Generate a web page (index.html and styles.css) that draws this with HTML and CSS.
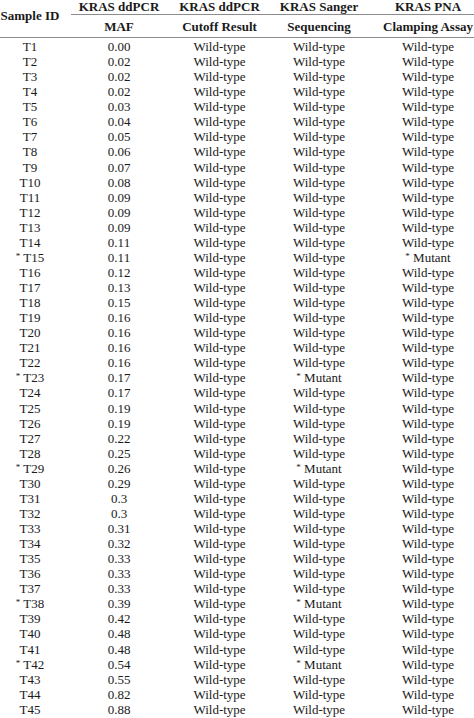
FILE: index.html
```html
<!DOCTYPE html>
<html>
<head>
<meta charset="utf-8">
<link rel="stylesheet" href="styles.css">
</head>
<body>
<table class="tbl">
<colgroup><col class="c1"><col class="c2"><col class="c3"><col class="c4"><col class="c5"></colgroup>
<thead>
<tr class="h1">
<th rowspan="2" class="sid">Sample ID</th>
<th class="grp first">KRAS ddPCR</th>
<th class="grp">KRAS ddPCR</th>
<th class="grp">KRAS Sanger</th>
<th class="grp">KRAS PNA</th>
</tr>
<tr class="h2">
<th>MAF</th>
<th>Cutoff Result</th>
<th>Sequencing</th>
<th>Clamping Assay</th>
</tr>
</thead>
<tbody>
<tr class="r0"><td>T1</td><td>0.00</td><td>Wild-type</td><td>Wild-type</td><td>Wild-type</td></tr>
<tr><td>T2</td><td>0.02</td><td>Wild-type</td><td>Wild-type</td><td>Wild-type</td></tr>
<tr><td>T3</td><td>0.02</td><td>Wild-type</td><td>Wild-type</td><td>Wild-type</td></tr>
<tr><td>T4</td><td>0.02</td><td>Wild-type</td><td>Wild-type</td><td>Wild-type</td></tr>
<tr><td>T5</td><td>0.03</td><td>Wild-type</td><td>Wild-type</td><td>Wild-type</td></tr>
<tr><td>T6</td><td>0.04</td><td>Wild-type</td><td>Wild-type</td><td>Wild-type</td></tr>
<tr><td>T7</td><td>0.05</td><td>Wild-type</td><td>Wild-type</td><td>Wild-type</td></tr>
<tr><td>T8</td><td>0.06</td><td>Wild-type</td><td>Wild-type</td><td>Wild-type</td></tr>
<tr><td>T9</td><td>0.07</td><td>Wild-type</td><td>Wild-type</td><td>Wild-type</td></tr>
<tr><td>T10</td><td>0.08</td><td>Wild-type</td><td>Wild-type</td><td>Wild-type</td></tr>
<tr><td>T11</td><td>0.09</td><td>Wild-type</td><td>Wild-type</td><td>Wild-type</td></tr>
<tr><td>T12</td><td>0.09</td><td>Wild-type</td><td>Wild-type</td><td>Wild-type</td></tr>
<tr><td>T13</td><td>0.09</td><td>Wild-type</td><td>Wild-type</td><td>Wild-type</td></tr>
<tr><td>T14</td><td>0.11</td><td>Wild-type</td><td>Wild-type</td><td>Wild-type</td></tr>
<tr><td><span class="ast">*</span> T15</td><td>0.11</td><td>Wild-type</td><td>Wild-type</td><td><span class="ast">*</span> Mutant</td></tr>
<tr><td>T16</td><td>0.12</td><td>Wild-type</td><td>Wild-type</td><td>Wild-type</td></tr>
<tr><td>T17</td><td>0.13</td><td>Wild-type</td><td>Wild-type</td><td>Wild-type</td></tr>
<tr><td>T18</td><td>0.15</td><td>Wild-type</td><td>Wild-type</td><td>Wild-type</td></tr>
<tr><td>T19</td><td>0.16</td><td>Wild-type</td><td>Wild-type</td><td>Wild-type</td></tr>
<tr><td>T20</td><td>0.16</td><td>Wild-type</td><td>Wild-type</td><td>Wild-type</td></tr>
<tr><td>T21</td><td>0.16</td><td>Wild-type</td><td>Wild-type</td><td>Wild-type</td></tr>
<tr><td>T22</td><td>0.16</td><td>Wild-type</td><td>Wild-type</td><td>Wild-type</td></tr>
<tr><td><span class="ast">*</span> T23</td><td>0.17</td><td>Wild-type</td><td><span class="ast">*</span> Mutant</td><td>Wild-type</td></tr>
<tr><td>T24</td><td>0.17</td><td>Wild-type</td><td>Wild-type</td><td>Wild-type</td></tr>
<tr><td>T25</td><td>0.19</td><td>Wild-type</td><td>Wild-type</td><td>Wild-type</td></tr>
<tr><td>T26</td><td>0.19</td><td>Wild-type</td><td>Wild-type</td><td>Wild-type</td></tr>
<tr><td>T27</td><td>0.22</td><td>Wild-type</td><td>Wild-type</td><td>Wild-type</td></tr>
<tr><td>T28</td><td>0.25</td><td>Wild-type</td><td>Wild-type</td><td>Wild-type</td></tr>
<tr><td><span class="ast">*</span> T29</td><td>0.26</td><td>Wild-type</td><td><span class="ast">*</span> Mutant</td><td>Wild-type</td></tr>
<tr><td>T30</td><td>0.29</td><td>Wild-type</td><td>Wild-type</td><td>Wild-type</td></tr>
<tr><td>T31</td><td>0.3</td><td>Wild-type</td><td>Wild-type</td><td>Wild-type</td></tr>
<tr><td>T32</td><td>0.3</td><td>Wild-type</td><td>Wild-type</td><td>Wild-type</td></tr>
<tr><td>T33</td><td>0.31</td><td>Wild-type</td><td>Wild-type</td><td>Wild-type</td></tr>
<tr><td>T34</td><td>0.32</td><td>Wild-type</td><td>Wild-type</td><td>Wild-type</td></tr>
<tr><td>T35</td><td>0.33</td><td>Wild-type</td><td>Wild-type</td><td>Wild-type</td></tr>
<tr><td>T36</td><td>0.33</td><td>Wild-type</td><td>Wild-type</td><td>Wild-type</td></tr>
<tr><td>T37</td><td>0.33</td><td>Wild-type</td><td>Wild-type</td><td>Wild-type</td></tr>
<tr><td><span class="ast">*</span> T38</td><td>0.39</td><td>Wild-type</td><td><span class="ast">*</span> Mutant</td><td>Wild-type</td></tr>
<tr><td>T39</td><td>0.42</td><td>Wild-type</td><td>Wild-type</td><td>Wild-type</td></tr>
<tr><td>T40</td><td>0.48</td><td>Wild-type</td><td>Wild-type</td><td>Wild-type</td></tr>
<tr><td>T41</td><td>0.48</td><td>Wild-type</td><td>Wild-type</td><td>Wild-type</td></tr>
<tr><td><span class="ast">*</span> T42</td><td>0.54</td><td>Wild-type</td><td><span class="ast">*</span> Mutant</td><td>Wild-type</td></tr>
<tr><td>T43</td><td>0.55</td><td>Wild-type</td><td>Wild-type</td><td>Wild-type</td></tr>
<tr><td>T44</td><td>0.82</td><td>Wild-type</td><td>Wild-type</td><td>Wild-type</td></tr>
<tr><td>T45</td><td>0.88</td><td>Wild-type</td><td>Wild-type</td><td>Wild-type</td></tr>
</tbody>
</table>
</body>
</html>
```
FILE: styles.css
```css
html, body {
  margin: 0;
  padding: 0;
  background: #ffffff;
}
body {
  width: 474px;
  height: 718px;
  overflow: hidden;
  font-family: "Liberation Serif", "Times New Roman", serif;
  color: #1a1a1a;
  font-size: 13px;
}
.tbl {
  border-collapse: collapse;
  table-layout: fixed;
  width: 479px;
}
.c1 { width: 60px; }
.c2 { width: 118px; }
.c3 { width: 83px; }
.c4 { width: 116px; }
.c5 { width: 102px; }
.tbl th, .tbl td {
  padding: 0;
  text-align: center;
  white-space: nowrap;
  overflow: visible;
}
.tbl th {
  font-weight: bold;
}
.h1 th {
  height: 15px;
  line-height: 14px;
  vertical-align: top;
}
.h1 th.grp {
  background-image: linear-gradient(#8c8c8c, #8c8c8c);
  background-repeat: no-repeat;
  background-position: left bottom;
  background-size: 100% 1px;
}
.h1 th.grp.first {
  background-position: right bottom;
  background-size: calc(100% - 11px) 1px;
}
.h1 th.sid {
  vertical-align: top;
  line-height: 15px;
  padding-top: 8px;
  border-bottom: 1px solid #8c8c8c;
}
.h2 th {
  height: 22px;
  line-height: 15px;
  vertical-align: middle;
  border-bottom: 1px solid #8c8c8c;
}
.tbl td {
  height: 15.07px;
  line-height: 15.07px;
}
.r0 td {
  padding-top: 1px;
}
.ast {
  font-size: 9px;
  vertical-align: 3px;
  line-height: 0;
}
```
